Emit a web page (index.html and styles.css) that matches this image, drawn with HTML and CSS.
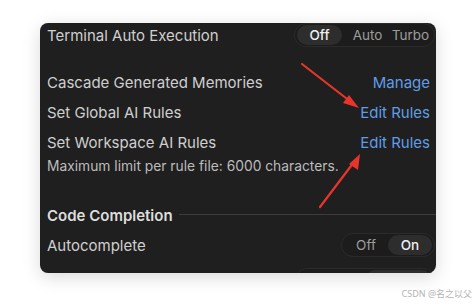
FILE: index.html
```html
<!DOCTYPE html>
<html lang="en">
<head>
  <meta charset="UTF-8" />
  <title>Cascade Settings</title>
  <link rel="stylesheet" href="styles.css">
</head>
<body>
  <div class="panel">
    <div class="row row-top">
      <span>Terminal Auto Execution</span>
      <div class="seg seg-three">
        <span class="seg-opt active">Off</span>
        <span class="seg-opt">Auto</span>
        <span class="seg-opt">Turbo</span>
      </div>
    </div>

    <div class="row first-group">
      <span>Cascade Generated Memories</span>
      <a class="link">Manage</a>
    </div>
    <div class="row">
      <span>Set Global AI Rules</span>
      <a class="link">Edit Rules</a>
    </div>
    <div class="row">
      <span>Set Workspace AI Rules</span>
      <a class="link">Edit Rules</a>
    </div>
    <div class="note">Maximum limit per rule file: 6000 characters.</div>

    <div class="section-title">
      <span>Code Completion</span>
      <div class="line"></div>
    </div>
    <div class="row">
      <span>Autocomplete</span>
      <div class="seg seg-two">
        <span class="seg-opt">Off</span>
        <span class="seg-opt active">On</span>
      </div>
    </div>
    <div class="row row-cut">
      <span></span>
      <div class="seg seg-ghost">
        <span class="seg-opt">&nbsp;</span>
        <span class="seg-opt active">&nbsp;</span>
      </div>
    </div>

    <!-- red arrows drawn over the screenshot -->
    <svg class="arrows" width="396" height="250" viewBox="0 0 396 250">
      <line x1="262" y1="41" x2="311" y2="79" stroke="#e8352c" stroke-width="2.2" stroke-linecap="round"/>
      <polygon points="319,85 303,80 309,72" fill="#e8352c"/>
      <line x1="280" y1="184" x2="314" y2="139" stroke="#e8352c" stroke-width="2.2" stroke-linecap="round"/>
      <polygon points="320,131 318,147 309,141" fill="#e8352c"/>
    </svg>
  </div>
  <div class="watermark">CSDN @名之以父</div>
</body>
</html>
```

FILE: styles.css
```css
body {
  margin: 0;
  background: #fff;
  font-family: 'Inter', 'Noto Sans', Arial, sans-serif;
}
.panel {
  position: relative;
  margin: 23px 0 0 40px;
  width: 396px;
  height: 250px;
  background: #1f1f1f;
  border-radius: 8px;
  overflow: hidden;
  box-shadow: 0 4px 18px #00000026;
  padding-left: 7px;
  box-sizing: border-box;
  color: #cfcfcf;
  font-size: 15px;
}
.row {
  height: 30px;
  display: flex;
  align-items: center;
  justify-content: space-between;
}
.row-top {
  height: 24px;
}
.first-group {
  margin-top: 20px;
}
.link {
  color: #5f9de6;
  font-size: 15px;
  margin-right: 6px;
}
.note {
  height: 18px;
  line-height: 18px;
  font-size: 13.8px;
  color: #bcbcbc;
}
.section-title {
  margin-top: 25px;
  height: 30px;
  display: flex;
  align-items: center;
  gap: 6px;
  font-weight: 600;
  color: #dedede;
}
.section-title .line {
  flex: 1;
  height: 1px;
  background: #3c3c3c;
  margin-top: -2px;
}
.seg {
  display: flex;
  align-items: center;
  height: 24px;
  padding: 0 2px;
  border-radius: 12px;
  background: #1c1c1c;
  border: 1px solid #2b2b2b;
  margin-right: 1px;
  box-sizing: border-box;
}
.seg-three {
  width: 141px;
  margin-top: -1px;
}
.seg-two {
  width: 94px;
}
.seg-ghost {
  width: 140px;
  margin-top: 10px;
}
.seg-opt {
  font-size: 13.5px;
  color: #9c9c9c;
  height: 20px;
  line-height: 20px;
  border-radius: 10px;
  text-align: center;
  flex: 1;
}
.seg-three .seg-opt.active {
  flex: 0 0 45px;
  margin-left: 0;
  margin-right: 4px;
}
.seg-two .seg-opt.active {
  flex: 0 0 44px;
}
.seg-opt.active {
  background: #2d2d2d;
  color: #f0f0f0;
  font-weight: 500;
}
.arrows {
  position: absolute;
  left: 0;
  top: 0;
}
.watermark {
  margin-top: 15px;
  text-align: right;
  padding-right: 2px;
  font-family: 'Noto Sans', 'Noto Sans CJK SC', sans-serif;
  font-size: 9px;
  line-height: 12px;
  color: #b4b4b4;
}
```
